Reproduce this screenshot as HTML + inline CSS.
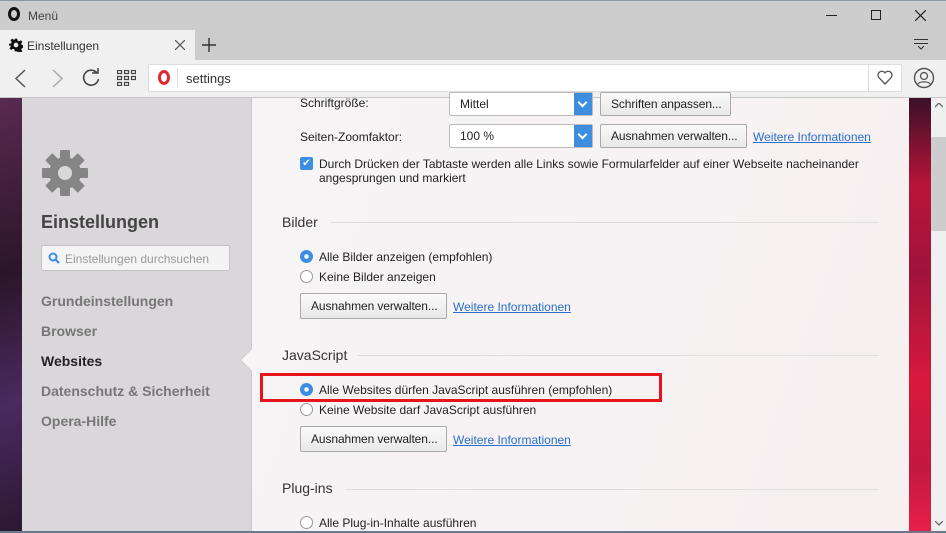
<!DOCTYPE html><html><head><meta charset="utf-8"><style>
*{margin:0;padding:0;box-sizing:border-box}
body{width:946px;height:533px;overflow:hidden;font-family:"Liberation Sans",sans-serif;font-size:12px;color:#222;position:relative;background:#ccc}
.a{position:absolute}
.btn{position:absolute;height:24px;border:1px solid #aaa;border-radius:2px;background:linear-gradient(#fafafa,#e8e8e8);font-size:12px;line-height:22px;padding:0 8px 0 10px;color:#222;letter-spacing:-0.1px}
.lnk{position:absolute;color:#2a6fc9;text-decoration:underline;font-size:12px}
.sel{position:absolute;height:24px;border:1px solid #bbb;border-radius:2px;background:#fff;font-size:12px;line-height:22px;padding-left:10px}
.sel i{position:absolute;right:0;top:0;width:18px;height:22px;background:#3d8ee0}
.sel i:after{content:"";position:absolute;left:5px;top:6px;width:5px;height:5px;border-right:2px solid #fff;border-bottom:2px solid #fff;transform:rotate(45deg)}
.rad{position:absolute;width:13px;height:13px;border-radius:50%;border:1px solid #999;background:#fff}
.rad.on{border-color:#3d8ee0;background:radial-gradient(#fff 2px,#3d8ee0 2.5px)}
.t{position:absolute;font-size:12px;white-space:nowrap}
.h{position:absolute;font-size:14px;color:#333}
.hr{position:absolute;height:1px;background:#ddd}
.nav{position:absolute;left:41px;font-size:14px;color:#777;font-weight:bold}
</style></head><body>
<div class="a" style="left:0;top:0;width:946px;height:30px;background:#cdcdcd;border-top:1px solid #8a9aa8"></div>
<div class="a" style="left:8px;top:7px;width:12px;height:14px;border:3px solid #111;border-radius:50%"></div>
<div class="t" style="left:28px;top:9px;color:#444;font-size:12px">Menü</div>
<div class="a" style="left:826px;top:15px;width:11px;height:1px;background:#222"></div>
<div class="a" style="left:871px;top:10px;width:10px;height:10px;border:1px solid #222"></div>
<svg class="a" style="left:915px;top:10px" width="11" height="11"><path d="M0 0L11 11M11 0L0 11" stroke="#222" stroke-width="1.2"/></svg>
<div class="a" style="left:0;top:30px;width:195px;height:30px;background:#f0f0f0"></div>
<svg class="a" style="left:9px;top:38px" width="14" height="14" viewBox="0 0 48 48"><path fill="#111" d="M20 2h8l1.5 7 5 2.5 6-4 5.5 5.5-4 6 2 5 7 1.5v8l-7 1.5-2 5 4 6-5.5 5.5-6-4-5 2L28 46h-8l-1.5-7-5-2-6 4-5.5-5.5 4-6-2-5L0 28v-8l7-1.5 2-5-4-6L10.5 2l6 4 5-2z"/><circle cx="24" cy="24" r="8" fill="#f0f0f0"/></svg>
<div class="t" style="left:27px;top:39px;color:#333">Einstellungen</div>
<svg class="a" style="left:175px;top:40px" width="10" height="10"><path d="M0 0L10 10M10 0L0 10" stroke="#555" stroke-width="1.2"/></svg>
<svg class="a" style="left:202px;top:38px" width="14" height="14"><path d="M7 0V14M0 7H14" stroke="#333" stroke-width="1.4"/></svg>
<div class="a" style="left:914px;top:39px;width:14px;height:1px;background:#333"></div>
<div class="a" style="left:914px;top:43px;width:14px;height:1px;background:#333"></div>
<svg class="a" style="left:918px;top:46px" width="6" height="4"><path d="M0 0L3 3L6 0" stroke="#333" fill="none"/></svg>
<div class="a" style="left:0;top:60px;width:946px;height:38px;background:#f0f0f0;border-bottom:1px solid #c8c8c8"></div>
<svg class="a" style="left:14px;top:69px" width="12" height="19"><path d="M11 1L2 9.5L11 18" stroke="#555" stroke-width="1.5" fill="none"/></svg>
<svg class="a" style="left:52px;top:69px" width="12" height="19"><path d="M1 1L10 9.5L1 18" stroke="#aaa" stroke-width="1.5" fill="none"/></svg>
<svg class="a" style="left:81px;top:68px" width="20" height="20"><path d="M16 5A7.5 7.5 0 1 0 17.5 11" stroke="#444" stroke-width="1.6" fill="none"/><path d="M11 5H17V-1" stroke="#444" stroke-width="1.6" fill="none"/></svg>
<svg class="a" style="left:117px;top:70px" width="19" height="16"><g fill="none" stroke="#444" stroke-width="1.2"><rect x=".5" y=".5" width="4" height="3"/><rect x="7.5" y=".5" width="4" height="3"/><rect x="14.5" y=".5" width="4" height="3"/><rect x=".5" y="6.5" width="4" height="3"/><rect x="7.5" y="6.5" width="4" height="3"/><rect x="14.5" y="6.5" width="4" height="3"/><rect x=".5" y="12.5" width="4" height="3"/><rect x="7.5" y="12.5" width="4" height="3"/></g></svg>
<div class="a" style="left:148px;top:64px;width:754px;height:28px;background:#fff;border:1px solid #ddd"></div>
<div class="a" style="left:158px;top:70px;width:12px;height:15px;border:3px solid #e0262e;border-radius:50%"></div>
<div class="a" style="left:177px;top:68px;width:1px;height:20px;background:#ddd"></div>
<div class="t" style="left:186px;top:71px;font-size:13px;color:#333">settings</div>
<div class="a" style="left:868px;top:64px;width:1px;height:28px;background:#ddd"></div>
<svg class="a" style="left:877px;top:70px" width="16" height="15"><path d="M8 14L1.8 7.5A3.6 3.6 0 0 1 8 2.8A3.6 3.6 0 0 1 14.2 7.5Z" stroke="#555" stroke-width="1.3" fill="none"/></svg>
<svg class="a" style="left:913px;top:67px" width="22" height="22"><circle cx="11" cy="11" r="9.5" stroke="#555" stroke-width="1.4" fill="none"/><circle cx="11" cy="9" r="3.5" stroke="#555" stroke-width="1.3" fill="none"/><path d="M4.5 17.5C6 14 16 14 17.5 17.5" stroke="#555" stroke-width="1.3" fill="none"/></svg>
<div class="a" style="left:0;top:98px;width:22px;height:435px;background:linear-gradient(160deg,#5a2a50,#2a1628 40%,#4a2a60 70%,#2a1830)"></div>
<div class="a" style="left:22px;top:98px;width:229px;height:435px;background:#d9d7d9"></div>
<div class="a" style="left:251px;top:98px;width:658px;height:435px;background:linear-gradient(110deg,#f6f4f5,#f7f2f3 60%,#f7eff0);border-left:1px solid #c9c9c9"></div>
<div class="a" style="left:909px;top:98px;width:22px;height:435px;background:linear-gradient(#3a1028 0,#b8143a 20%,#a0143a 40%,#d8183e 65%,#c21840 85%,#e8204a)"></div>
<div class="a" style="left:931px;top:98px;width:15px;height:435px;background:#f0f0f0"></div>
<div class="a" style="left:931px;top:137px;width:15px;height:94px;background:#cdcdcd"></div>
<svg class="a" style="left:935px;top:103px" width="8" height="5"><path d="M0 4L4 0L8 4" stroke="#666" fill="none" stroke-width="1.3"/></svg>
<svg class="a" style="left:935px;top:521px" width="8" height="5"><path d="M0 0L4 4L8 0" stroke="#666" fill="none" stroke-width="1.3"/></svg>
<svg class="a" style="left:41px;top:149px" width="48" height="48" viewBox="0 0 48 48"><g fill="#858585"><circle cx="24" cy="24" r="16"/><g id="th"><rect x="19" y="1" width="10" height="46" rx="1"/></g><use href="#th" transform="rotate(45 24 24)"/><use href="#th" transform="rotate(90 24 24)"/><use href="#th" transform="rotate(135 24 24)"/></g><circle cx="24" cy="24" r="7" fill="#d9d7d9"/></svg>
<div class="t" style="left:41px;top:212px;font-size:18px;font-weight:bold;color:#444">Einstellungen</div>
<div class="a" style="left:41px;top:245px;width:189px;height:26px;background:#f4f4f4;border:1px solid #c4c4c4;border-radius:2px"></div>
<svg class="a" style="left:48px;top:252px" width="12" height="12"><circle cx="5" cy="5" r="3.5" stroke="#3d8ee0" stroke-width="2" fill="none"/><path d="M7.5 7.5L11 11" stroke="#3d8ee0" stroke-width="2.2"/></svg>
<div class="t" style="left:65px;top:252px;color:#999">Einstellungen durchsuchen</div>
<div class="nav" style="top:293px">Grundeinstellungen</div>
<div class="nav" style="top:323px">Browser</div>
<div class="nav" style="top:353px;color:#222">Websites</div>
<div class="nav" style="top:383px">Datenschutz &amp; Sicherheit</div>
<div class="nav" style="top:413px">Opera-Hilfe</div>
<div class="a" style="left:243px;top:352px;width:16px;height:16px;background:#f6f4f5;border-left:1px solid #c9c9c9;border-bottom:1px solid #c9c9c9;transform:rotate(45deg)"></div>
<div class="t" style="left:300px;top:96px">Schriftgröße:</div>
<div class="sel" style="left:449px;top:92px;width:144px">Mittel<i></i></div>
<div class="btn" style="left:600px;top:92px">Schriften anpassen...</div>
<div class="t" style="left:300px;top:130px">Seiten-Zoomfaktor:</div>
<div class="sel" style="left:449px;top:124px;width:144px">100 %<i></i></div>
<div class="btn" style="left:600px;top:124px">Ausnahmen verwalten...</div>
<div class="lnk" style="left:753px;top:130px">Weitere Informationen</div>
<div class="a" style="left:300px;top:157px;width:13px;height:13px;background:#3d8ee0;border-radius:2px;color:#fff;font-size:10px;line-height:13px;text-align:center">✔</div>
<div class="t" style="left:319px;top:157px;line-height:14px">Durch Drücken der Tabtaste werden alle Links sowie Formularfelder auf einer Webseite nacheinander<br>angesprungen und markiert</div>
<div class="h" style="left:282px;top:214px">Bilder</div>
<div class="hr" style="left:330px;top:222px;width:549px"></div>
<div class="rad on" style="left:300px;top:250px"></div>
<div class="t" style="left:319px;top:250px">Alle Bilder anzeigen (empfohlen)</div>
<div class="rad" style="left:300px;top:270px"></div>
<div class="t" style="left:319px;top:270px">Keine Bilder anzeigen</div>
<div class="btn" style="left:300px;top:293px;height:26px;line-height:24px">Ausnahmen verwalten...</div>
<div class="lnk" style="left:453px;top:300px">Weitere Informationen</div>
<div class="h" style="left:282px;top:347px">JavaScript</div>
<div class="hr" style="left:357px;top:355px;width:522px"></div>
<div class="a" style="left:260px;top:373px;width:402px;height:29px;border:3px solid #e8141c"></div>
<div class="rad on" style="left:300px;top:383px"></div>
<div class="t" style="left:319px;top:383px">Alle Websites dürfen JavaScript ausführen (empfohlen)</div>
<div class="rad" style="left:300px;top:403px"></div>
<div class="t" style="left:319px;top:403px">Keine Website darf JavaScript ausführen</div>
<div class="btn" style="left:300px;top:426px;height:26px;line-height:24px">Ausnahmen verwalten...</div>
<div class="lnk" style="left:453px;top:433px">Weitere Informationen</div>
<div class="h" style="left:282px;top:480px">Plug-ins</div>
<div class="hr" style="left:345px;top:489px;width:534px"></div>
<div class="rad" style="left:300px;top:516px"></div>
<div class="t" style="left:319px;top:516px">Alle Plug-in-Inhalte ausführen</div>
<div class="a" style="left:0;top:531px;width:946px;height:2px;background:#6a7a8a"></div>
</body></html>
